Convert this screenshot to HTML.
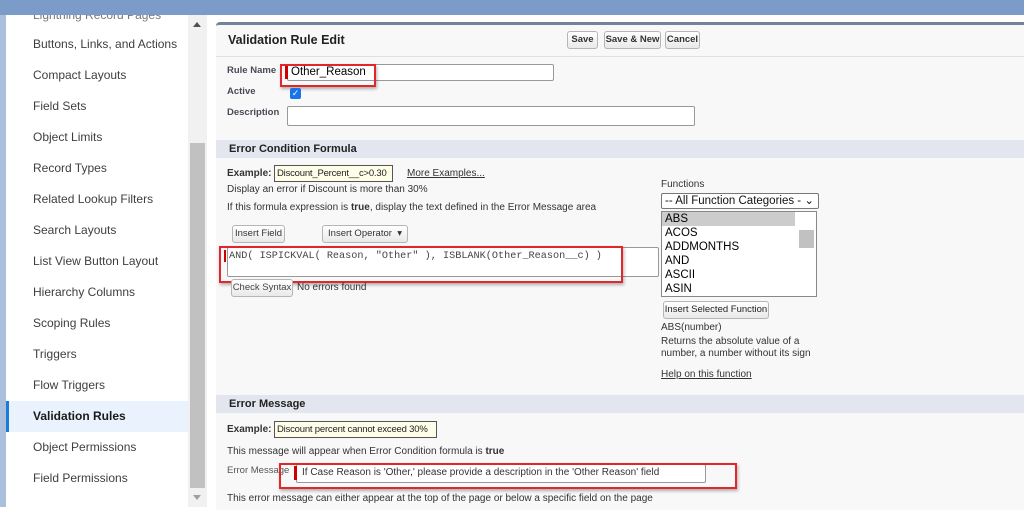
<!DOCTYPE html><html><head><style>
body{margin:0;width:1024px;height:507px;overflow:hidden;background:#fff;font-family:"Liberation Sans",Arial,sans-serif;position:relative}
*{white-space:nowrap}
.a{position:absolute}
.side div{position:absolute;left:33px;font-size:12px;color:#3e3e3c}
.btn{position:absolute;border:1px solid #b5b5b5;border-radius:3px;background:linear-gradient(#fff,#e9e9e9);font-size:9.5px;font-weight:bold;color:#333;text-align:center;line-height:16px;height:16px;overflow:hidden}
.t{position:absolute;font-size:10px;color:#333}
.lbl{position:absolute;font-size:9.5px;color:#4a4a56;font-weight:bold}
.inp{position:absolute;background:#fff;border:1px solid #999;border-radius:2px}
.red{position:absolute;border:2px solid #e3262a;box-shadow:1px 2px 3px rgba(0,0,0,.3)}
.sec{position:absolute;left:216px;width:808px;height:18px;background:#e3e6ee;font-size:11px;font-weight:bold;color:#222}
.fn div{height:14px;line-height:14px;padding-left:3px;font-size:11.5px;color:#000}
.ex{position:absolute;background:#fefde8;border:1px solid #555;font-size:9.5px;letter-spacing:-0.2px;line-height:15px;padding-left:2px;color:#222;height:15px;overflow:hidden}
</style></head><body>
<div class="a" style="left:0;top:0;width:6px;height:507px;background:#a9bfdc"></div>
<div class="a" style="left:6px;top:15px;width:1018px;height:492px;background:#fff;border-radius:6px 0 0 0"></div>
<div class="side">
<div style="top:8px;color:#777">Lightning Record Pages</div>
<div style="top:37px">Buttons, Links, and Actions</div>
<div style="top:68px">Compact Layouts</div>
<div style="top:99px">Field Sets</div>
<div style="top:130px">Object Limits</div>
<div style="top:161px">Record Types</div>
<div style="top:192px">Related Lookup Filters</div>
<div style="top:223px">Search Layouts</div>
<div style="top:254px">List View Button Layout</div>
<div style="top:285px">Hierarchy Columns</div>
<div style="top:316px">Scoping Rules</div>
<div style="top:347px">Triggers</div>
<div style="top:378px">Flow Triggers</div>
</div>
<div class="a" style="left:0;top:0;width:1024px;height:15px;background:#7b9cc8"></div>
<div class="a" style="left:6px;top:401px;width:182px;height:31px;background:#eaf3fd"></div>
<div class="a" style="left:6px;top:401px;width:3px;height:31px;background:#1b7cd8"></div>
<div class="side">
<div style="top:409px;font-weight:bold;color:#1a1a1a">Validation Rules</div>
<div style="top:440px">Object Permissions</div>
<div style="top:471px">Field Permissions</div>
</div>
<div class="a" style="left:188px;top:15px;width:19px;height:492px;background:#f1f1f1"></div>
<div class="a" style="left:190px;top:143px;width:15px;height:345px;background:#c1c1c1"></div>
<div class="a" style="left:193px;top:22px;width:0;height:0;border:4px solid transparent;border-bottom:5px solid #505050;border-top:0"></div>
<div class="a" style="left:193px;top:495px;width:0;height:0;border:4px solid transparent;border-top:5px solid #a0a0a0;border-bottom:0"></div>

<div class="a" style="left:216px;top:22px;width:808px;height:485px;background:#f8f8f8;border-top:3px solid #75829c;border-radius:4px 0 0 0"></div>
<div class="a" style="left:216px;top:56px;width:808px;height:1px;background:#e0e0e0"></div>
<div class="a" style="left:228px;top:33px;font-size:12.5px;font-weight:bold;color:#222">Validation Rule Edit</div>
<div class="btn" style="left:567px;top:31px;width:29px">Save</div>
<div class="btn" style="left:604px;top:31px;width:55px">Save &amp; New</div>
<div class="btn" style="left:665px;top:31px;width:33px">Cancel</div>

<div class="lbl" style="left:227px;top:65px">Rule Name</div>
<div class="inp" style="left:287px;top:64px;width:265px;height:15px"></div>
<div class="a" style="left:285px;top:66px;width:3px;height:13px;background:#c00"></div>
<div class="t" style="left:291px;top:66px;font-size:11.5px;color:#000">Other_Reason</div>
<div class="red" style="left:280px;top:64px;width:92px;height:19px"></div>
<div class="lbl" style="left:227px;top:86px">Active</div>
<div class="a" style="left:290px;top:88px;width:11px;height:11px;background:#1a73e8;border-radius:2px;color:#fff;font-size:9px;line-height:11px;text-align:center">✓</div>
<div class="lbl" style="left:227px;top:107px">Description</div>
<div class="inp" style="left:287px;top:106px;width:406px;height:18px"></div>

<div class="sec" style="top:140px"><span style="position:absolute;left:13px;top:3px">Error Condition Formula</span></div>
<div class="t" style="left:227px;top:168px;font-weight:bold">Example:</div>
<div class="ex" style="left:274px;top:165px;width:115px">Discount_Percent__c&gt;0.30</div>
<div class="t" style="left:407px;top:168px;text-decoration:underline">More Examples...</div>
<div class="t" style="left:227px;top:184px">Display an error if Discount is more than 30%</div>
<div class="t" style="left:227px;top:202px">If this formula expression is <b>true</b>, display the text defined in the Error Message area</div>
<div class="btn" style="left:232px;top:225px;width:51px;font-weight:normal">Insert Field</div>
<div class="btn" style="left:322px;top:225px;width:84px;font-weight:normal">Insert Operator &nbsp;▾</div>
<div class="inp" style="left:227px;top:247px;width:430px;height:28px"></div>
<div class="a" style="left:224px;top:250px;width:2px;height:12px;background:#c00"></div>
<div class="a" style="left:229px;top:251px;font-family:'Liberation Mono',monospace;font-size:10.2px;color:#444">AND( ISPICKVAL( Reason, "Other" ), ISBLANK(Other_Reason__c) )</div>
<div class="red" style="left:219px;top:246px;width:400px;height:33px"></div>
<div class="btn" style="left:231px;top:279px;width:60px;font-weight:normal;color:#444">Check Syntax</div>
<div class="t" style="left:297px;top:282px">No errors found</div>

<div class="t" style="left:661px;top:179px">Functions</div>
<div class="a" style="left:661px;top:193px;width:153px;height:14px;background:#fff;border:1px solid #777;border-radius:2px;font-size:11.5px;line-height:14px;padding-left:3px;color:#111">-- All Function Categories - ⌄</div>
<div class="a fn" style="left:661px;top:211px;width:154px;height:84px;background:#fff;border:1px solid #888;overflow:hidden">
<div style="background:#ccc;width:130px">ABS</div><div>ACOS</div><div>ADDMONTHS</div><div>AND</div><div>ASCII</div><div>ASIN</div></div>
<div class="a" style="left:799px;top:230px;width:15px;height:18px;background:#c1c1c1"></div>
<div class="btn" style="left:663px;top:301px;width:104px;font-weight:normal;color:#222">Insert Selected Function</div>
<div class="t" style="left:661px;top:322px">ABS(number)</div>
<div class="t" style="left:661px;top:336px;line-height:12px">Returns the absolute value of a<br>number, a number without its sign</div>
<div class="t" style="left:661px;top:369px;text-decoration:underline">Help on this function</div>

<div class="sec" style="top:395px"><span style="position:absolute;left:13px;top:3px">Error Message</span></div>
<div class="t" style="left:227px;top:424px;font-weight:bold">Example:</div>
<div class="ex" style="left:274px;top:421px;width:159px">Discount percent cannot exceed 30%</div>
<div class="t" style="left:227px;top:446px">This message will appear when Error Condition formula is <b>true</b></div>
<div class="t" style="left:227px;top:465px;font-size:9.5px;color:#555">Error Message</div>
<div class="inp" style="left:296px;top:464px;width:408px;height:17px"></div>
<div class="a" style="left:294px;top:466px;width:3px;height:14px;background:#c00"></div>
<div class="t" style="left:302px;top:467px">If Case Reason is 'Other,' please provide a description in the 'Other Reason' field</div>
<div class="red" style="left:279px;top:463px;width:454px;height:22px"></div>
<div class="t" style="left:227px;top:493px">This error message can either appear at the top of the page or below a specific field on the page</div>
</body></html>
